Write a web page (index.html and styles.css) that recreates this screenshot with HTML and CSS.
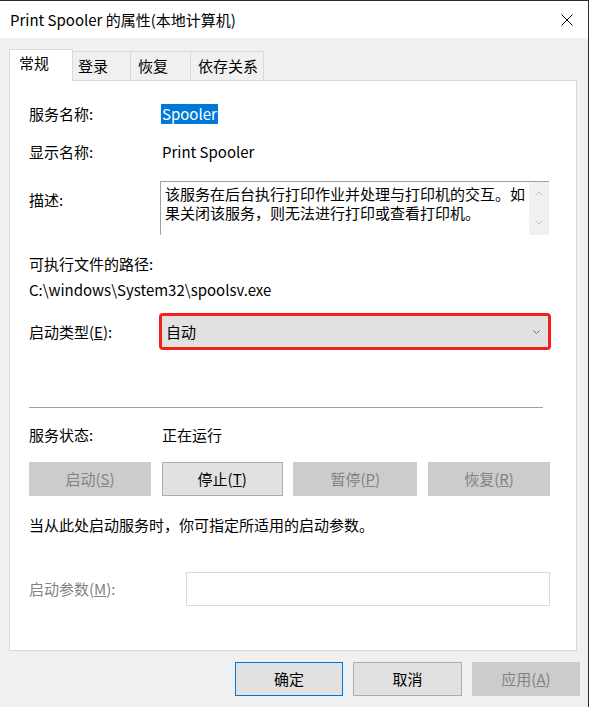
FILE: index.html
```html
<!DOCTYPE html>
<html lang="zh-CN">
<head>
<meta charset="utf-8">
<title>Print Spooler 的属性(本地计算机)</title>
<link rel="stylesheet" href="styles.css">
</head>
<body>
<div class="window">
  <header class="titlebar">
    <span class="title">Print Spooler 的属性(本地计算机)</span>
    <svg class="close" width="12" height="12" viewBox="0 0 12 12"><path d="M0.5 0.5 L11.5 11.5 M11.5 0.5 L0.5 11.5" stroke="#000" stroke-width="1" fill="none"/></svg>
  </header>
  <div class="body">
    <div class="tabs">
      <div class="tab active">常规</div>
      <div class="tab t-login">登录</div>
      <div class="tab t-recover">恢复</div>
      <div class="tab t-deps">依存关系</div>
    </div>
    <div class="panel">
      <div class="row r-name">
        <span class="label">服务名称:</span>
        <span class="sel">Spooler</span>
      </div>
      <div class="row r-display">
        <span class="label">显示名称:</span>
        <span class="value">Print Spooler</span>
      </div>
      <div class="row r-desc">
        <span class="label desc-label">描述:</span>
        <div class="descbox">
          <div class="desctext">该服务在后台执行打印作业并处理与打印机的交互。如果关闭该服务，则无法进行打印或查看打印机。</div>
          <div class="vscroll">
            <svg width="8" height="5" viewBox="0 0 8 5"><path d="M0.5 4.5 L4 1 L7.5 4.5" stroke="#bcbcbc" stroke-width="1" fill="none"/></svg>
            <svg width="8" height="5" viewBox="0 0 8 5"><path d="M0.5 0.5 L4 4 L7.5 0.5" stroke="#bcbcbc" stroke-width="1" fill="none"/></svg>
          </div>
        </div>
      </div>
      <div class="row r-pathlabel">
        <span class="label">可执行文件的路径:</span>
      </div>
      <div class="row r-path">
        <span class="label wide">C:\windows\System32\spoolsv.exe</span>
      </div>
      <div class="row r-type">
        <span class="label">启动类型(<u>E</u>):</span>
        <div class="highlight">
          <div class="combo">
            <span>自动</span>
            <svg width="7" height="4" viewBox="0 0 7 4"><path d="M0.5 0.5 L3.5 3.5 L6.5 0.5" stroke="#6d6d6d" stroke-width="1" fill="none"/></svg>
          </div>
        </div>
      </div>
      <div class="separator"></div>
      <div class="row r-status">
        <span class="label">服务状态:</span>
        <span class="value">正在运行</span>
      </div>
      <div class="btnrow">
        <button class="btn disabled b1">启动(<u>S</u>)</button>
        <button class="btn b2">停止(<u>T</u>)</button>
        <button class="btn disabled b3">暂停(<u>P</u>)</button>
        <button class="btn disabled b4">恢复(<u>R</u>)</button>
      </div>
      <div class="row r-note">
        <span class="label wide">当从此处启动服务时，你可指定所适用的启动参数。</span>
      </div>
      <div class="row r-param">
        <span class="label dim param-label">启动参数(<u>M</u>):</span>
        <div class="input"></div>
      </div>
    </div>
    <div class="footer">
      <button class="btn fbtn default">确定</button>
      <button class="btn fbtn">取消</button>
      <button class="btn fbtn disabled last">应用(<u>A</u>)</button>
    </div>
  </div>
</div>
</body>
</html>
```
FILE: styles.css
```css
* { box-sizing: border-box; }
html, body { margin: 0; padding: 0; }
body {
  font-family: "Noto Sans CJK SC", "Noto Sans", sans-serif;
  font-size: 15px;
  line-height: 20px;
  color: #000;
  background: #f0f0f0;
}
.window {
  width: 589px;
  height: 707px;
  border-top: 1px solid #2b2b2b;
  border-right: 1px solid #2b2b2b;
  background: #f0f0f0;
  overflow: hidden;
}
.titlebar {
  height: 37px;
  background: #fff;
  display: flex;
  align-items: center;
  justify-content: space-between;
  padding-left: 10px;
  padding-right: 15px;
}
.title { font-size: 15px; }
.close { display: block; margin-top: 1px; }

.tabs {
  display: flex;
  align-items: flex-end;
  padding-left: 9px;
  padding-top: 11px;
}
.tab {
  height: 29px;
  border-top: 1px solid #d9d9d9;
  border-right: 1px solid #d9d9d9;
  background: #f0f0f0;
  padding: 4px 0 0 5px;
}
.tab.active {
  position: relative;
  z-index: 1;
  width: 64px;
  height: 32px;
  margin-bottom: -1px;
  background: #fff;
  border-left: 1px solid #d9d9d9;
  padding: 3px 0 0 9px;
}
.t-login { width: 58px; }
.t-recover { width: 60px; padding-left: 7px; }
.t-deps { width: 73px; padding-left: 7px; }

.panel {
  margin-left: 9px;
  width: 568px;
  background: #fff;
  border: 1px solid #d9d9d9;
  padding: 0 26px 44px 19px;
}
.row { display: flex; align-items: center; height: 20px; }
.label { width: 131px; flex: none; white-space: nowrap; }
.label.wide { width: auto; }
.value { padding-left: 2px; }
.sel {
  margin-left: 1px;
  padding: 0 1px;
  background: #0078d7;
  color: #fff;
}
.r-name { margin-top: 23px; }
.r-display { margin-top: 18px; }
.r-desc { margin-top: 19px; height: 54px; align-items: flex-start; }
.desc-label { padding-top: 9px; }
.descbox {
  width: 389px;
  height: 54px;
  display: flex;
  border-top: 1px solid #a0a0a0;
  border-left: 1px solid #a0a0a0;
}
.desctext {
  flex: 1;
  padding: 2px 0 0 4px;
  line-height: 19px;
}
.vscroll {
  width: 20px;
  background: #f0f0f0;
  display: flex;
  flex-direction: column;
  align-items: center;
  justify-content: space-between;
  padding: 9px 0 10px;
}
.vscroll svg { display: block; }
.r-pathlabel { margin-top: 19px; }
.r-path { margin-top: 6px; }
.r-type { margin-top: 13px; height: 37px; }
.highlight {
  margin-left: -1px;
  margin-right: -1px;
  flex: 1;
  height: 37px;
  border: 3px solid #f3201a;
  border-radius: 4px;
}
.combo {
  height: 31px;
  background: #e1e1e1;
  display: flex;
  align-items: center;
  justify-content: space-between;
  padding: 0 8px 0 4px;
}
.combo svg { display: block; }
.separator {
  margin-top: 57px;
  width: 514px;
  border-top: 1px solid #a0a0a0;
}
.r-status { margin-top: 17px; }
.btnrow {
  margin-top: 17px;
  display: flex;
  justify-content: space-between;
}
.btn {
  font: inherit;
  height: 34px;
  padding: 0;
  background: #e1e1e1;
  border: 1px solid #adadad;
  color: #000;
  text-align: center;
}
.btn.disabled {
  background: #cccccc;
  border-color: #cccccc;
  color: #838383;
}
.b1 { width: 122px; }
.b2 { width: 121px; }
.b3 { width: 124px; }
.b4 { width: 122px; }
.r-note { margin-top: 19px; }
.r-param { margin-top: 37px; height: 34px; }
.dim { color: #838383; }
.param-label { width: 157px; }
.input {
  flex: 1;
  height: 34px;
  border: 1px solid #d9d9d9;
  background: #fff;
}
.footer {
  display: flex;
  justify-content: flex-end;
  gap: 10px;
  margin-top: 11px;
  padding-right: 8px;
}
.fbtn { width: 109px; }
.fbtn.default { width: 108px; border-color: #0078d7; }
.fbtn.last { width: 108px; }
```
